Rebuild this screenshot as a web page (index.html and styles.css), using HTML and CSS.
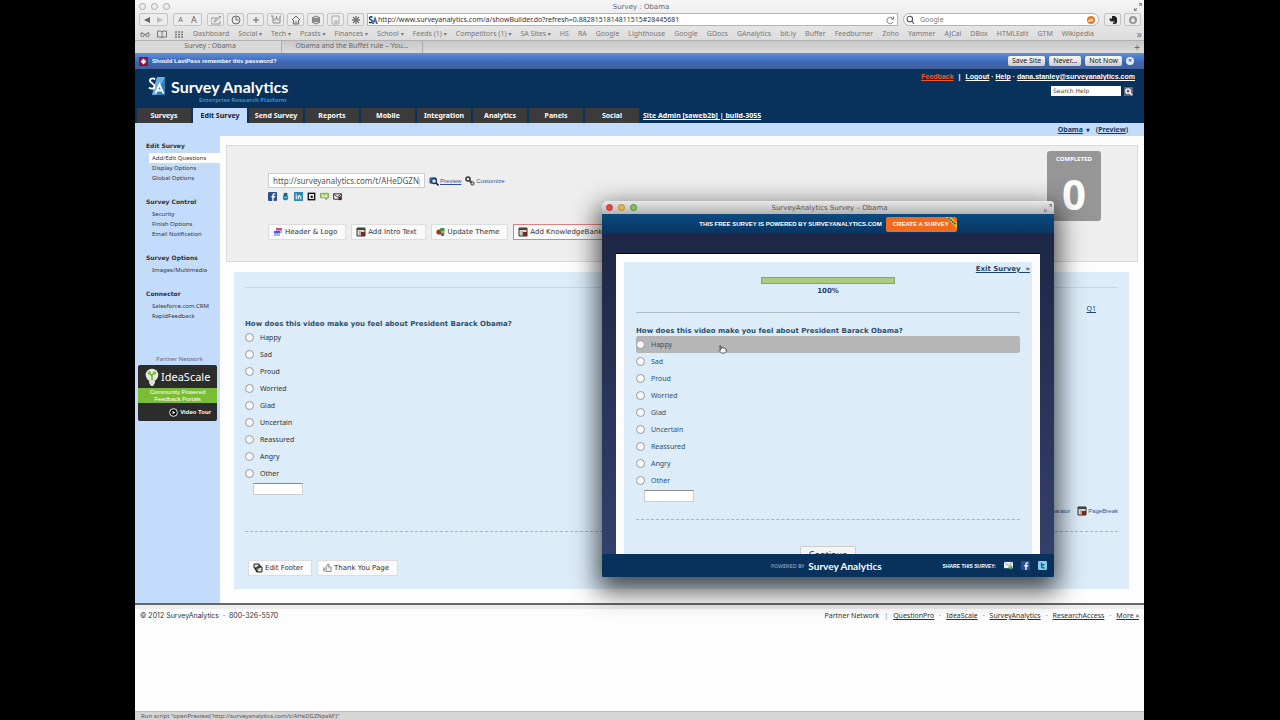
FILE: index.html
```html
<!DOCTYPE html>
<html lang="en">
<head>
<meta charset="utf-8">
<title>Survey : Obama</title>
<link rel="stylesheet" href="styles.css">
</head>
<body>
<svg class="defs" aria-hidden="true">
  <symbol id="i-page" viewBox="0 0 10 10"><path d="M1 1h8v8H1z" fill="#ddd8cc" stroke="#333"/><path d="M1 1h8v2H1z" fill="#444"/><path d="M5 5l4 0v4H5z" fill="#7a241c"/><path d="M3 5h2M3 7h2" stroke="#888"/></symbol>
  <symbol id="i-windows" viewBox="0 0 10 10"><path d="M3 1h6v5H3z" fill="#c9a0dd"/><path d="M3 1h6v2H3z" fill="#d44a7c"/><path d="M1 4h6v5H1z" fill="#9bb5f2"/><path d="M1 4h6v2H1z" fill="#4a5ad0"/></symbol>
  <symbol id="i-theme" viewBox="0 0 10 10"><circle cx="3" cy="5" r="2.6" fill="#a8301c"/><rect x="4" y="1" width="4.500" height="4.500" rx="1" fill="#2c9a3e"/><rect x="5.500" y="4" width="3" height="3" fill="#e0b030"/><circle cx="6.500" cy="7.500" r="1.800" fill="#2f6ec4"/></symbol>
  <symbol id="i-glass" viewBox="0 0 10 10"><path d="M1 2h6v5H1z" fill="#8fb4d8" stroke="#234"/><circle cx="5" cy="5" r="2.500" fill="#cfe4f5" stroke="#123c66" stroke-width="1.300"/><path d="M7 7l2.500 2.500" stroke="#222" stroke-width="1.600"/></symbol>
  <symbol id="i-tools" viewBox="0 0 10 10"><circle cx="3" cy="3" r="2" fill="none" stroke="#333" stroke-width="1.500"/><path d="M4 4l3 3" stroke="#444" stroke-width="2"/><circle cx="7.500" cy="7.500" r="1.600" fill="#ccc" stroke="#333"/></symbol>
  <symbol id="i-fb" viewBox="0 0 10 10"><rect width="10" height="10" rx="1" fill="#2f4f8f"/><path d="M8 2H7C6 2 5.500 2.700 5.500 3.500V10M3.800 5.300H8" fill="none" stroke="#fff" stroke-width="1.500"/></symbol>
  <symbol id="i-bird" viewBox="0 0 10 10"><ellipse cx="5" cy="6" rx="3" ry="3.300" fill="#2a7fae"/><path d="M3 1h4v3H3z" fill="#1c5d86"/><path d="M3 6h4" stroke="#7fc4e6"/></symbol>
  <symbol id="i-in" viewBox="0 0 10 10"><rect width="10" height="10" fill="#2f88b4"/><path d="M2.500 4v4M2.500 2v1M4.800 8V4M4.800 5.500C5 4 7.500 3.800 7.500 5.500V8" fill="none" stroke="#fff" stroke-width="1.200"/></symbol>
  <symbol id="i-qr" viewBox="0 0 10 10"><rect x="1.500" y="1.500" width="7" height="7" fill="#fff" stroke="#111" stroke-width="1.600"/><rect x="4" y="4" width="2.500" height="2.500" fill="#111"/></symbol>
  <symbol id="i-chat" viewBox="0 0 10 10"><path d="M.5 1.500h9v5H8L7 9 5.500 6.500h-5z" fill="#a6d468" stroke="#6a9c35" stroke-width=".8"/><path d="M3 3v2h4V3" fill="none" stroke="#fff"/></symbol>
  <symbol id="i-mail" viewBox="0 0 10 10"><path d="M.7 2h8.600v6H.7z" fill="#eee" stroke="#222"/><path d="M1 2.500l4 3 4-3" fill="none" stroke="#333"/><path d="M6 5h3.500v4H6z" fill="#5a2a26"/></symbol>
  <symbol id="i-share" viewBox="0 0 10 10"><path d="M0 1h10v7H0z" fill="#e8f2f4"/><path d="M0 1l5 4 5-4" fill="none" stroke="#89a"/><path d="M5 6h2V4l3 3-3 3V8H5z" fill="#5fb04a"/></symbol>
  <symbol id="i-tw" viewBox="0 0 10 10"><rect width="10" height="10" rx="1.500" fill="#7fd0ea"/><path d="M4 2v4c0 1.500 1 1.800 3.500 1.600M4 4.200h3" fill="none" stroke="#1d5f80" stroke-width="1.500"/></symbol>
  <symbol id="i-expand" viewBox="0 0 10 10"><path d="M5.500 1H9v3.500zM1 5.500V9h3.500z" fill="#888"/><path d="M8.500 1.500l-2.500 2.500M1.500 8.500L4 6" stroke="#888"/></symbol>
  <symbol id="i-footer" viewBox="0 0 10 10"><path d="M1 1h5v4H1zM4 4h5v5H4z" fill="#d8e0da" stroke="#222"/><path d="M2 5l2 4M6 2l2 2" stroke="#222" stroke-width="1.500"/></symbol>
  <symbol id="i-thumb" viewBox="0 0 10 10"><path d="M4 4l2-3 1 .5L6.500 4H9v4.500H4z" fill="#eee" stroke="#777" stroke-width=".8"/><path d="M1 4.500h2v4H1z" fill="#aaa"/></symbol>
</svg>

<div class="browser">
  <header class="chrome">
    <div class="titlebar">
      <span class="lights"><i></i><i></i><i></i></span>
      <span class="win-title">Survey : Obama</span>
      <svg class="ic"><use href="#i-expand"/></svg>
    </div>
    <div class="toolbar">
      <div class="tool wide"><button aria-label="Back"><svg class="ic" viewBox="0 0 10 10"><path d="M8 2v6L2 5z" fill="#666"/></svg></button><button aria-label="Forward"><svg class="ic" viewBox="0 0 10 10"><path d="M2 2v6l6-3z" fill="#bbb"/></svg></button></div>
      <div class="tool wide"><button class="small-a">A</button><button class="big-a">A</button></div>
      <button class="tool" aria-label="Edit"><svg class="ic" viewBox="0 0 10 10" fill="none" stroke="#888" stroke-width=".8"><path d="M6 3H0v6h9V6M3 7l1-2 5-4 1 1-5 4z"/></svg></button>
      <button class="tool" aria-label="History"><svg class="ic" viewBox="0 0 10 10" fill="none" stroke="#666"><circle cx="5" cy="5" r="4"/><path d="M5 2v3h2.500"/></svg></button>
      <button class="tool" aria-label="Add"><svg class="ic" viewBox="0 0 10 10" stroke="#666"><path d="M5 2v6M2 5h6"/></svg></button>
      <button class="tool" aria-label="Cart"><svg class="ic" viewBox="0 0 10 10" fill="none" stroke="#888"><path d="M0 1h2v7h7V1h1M4 3v3M7 3v3M5.500 1v3"/></svg></button>
      <button class="tool" aria-label="Home"><svg class="ic" viewBox="0 0 10 10" fill="none" stroke="#666"><path d="M1 5l4-4 4 4M2.500 5v4h5V5M5 9V6"/></svg></button>
      <button class="tool" aria-label="Stack"><svg class="ic" viewBox="0 0 10 10" fill="#eee" stroke="#666" stroke-width=".9"><path d="M5 5l4 2-4 2-4-2zM5 3l4 2-4 2-4-2zM5 1l4 2-4 2-4-2z"/></svg></button>
      <button class="tool" aria-label="Note"><svg class="ic" viewBox="0 0 10 10" fill="none" stroke="#aaa"><path d="M1 1h7v8H1zM5 5v4M3 7h4"/></svg></button>
      <button class="tool" aria-label="Password"><svg class="ic" viewBox="0 0 10 10" stroke="#777" stroke-width="1.300"><path d="M5 1v8M1 5h8M2 2l6 6M8 2L2 8"/></svg></button>
      <label class="field url"><svg class="ic" viewBox="0 0 10 10"><path d="M4.500 2.500C3 1 1 2 1.500 3.500S4.500 5 4.300 6.500 2 8 1 7" fill="none" stroke="#123c66" stroke-width="1.400"/><path d="M4 9l3-8 3 8H8L7 6 6 9z" fill="#3d6fa5"/></svg><input aria-label="Address" value="http://www.surveyanalytics.com/a/showBuilder.do?refresh=0.8828151814811515#28445681"><svg class="ic" viewBox="0 0 10 10" fill="none" stroke="#777"><path d="M8 4a3.200 3.200 0 1 0 0 3M8.500 1.500V4H6"/></svg></label>
      <label class="field search"><svg class="ic" viewBox="0 0 10 10" fill="none" stroke="#555" stroke-width="1.100"><circle cx="3.800" cy="4" r="2.800"/><path d="M6 6l2 3"/></svg><input aria-label="Search" placeholder="Google"><svg class="ic" viewBox="0 0 10 10"><circle cx="5" cy="5" r="4" fill="#ea7a22"/><path d="M3 7V5h4M5.500 3.500L7 5 5.500 6.500" fill="none" stroke="#fff"/></svg></label>
      <button class="tool" aria-label="Clip"><svg class="ic" viewBox="0 0 10 10" fill="#222"><path d="M4 1h3l2 2v5L7 9H5V7.500h1.500V6.500H3L1.500 5V3.500H4z"/></svg></button>
      <button class="tool last" aria-label="Downloads"><svg class="ic" viewBox="0 0 10 10"><circle cx="5" cy="5" r="4" fill="#999"/><path d="M5 3v4M3.500 5L5 6.500 6.500 5" fill="none" stroke="#fff" stroke-width="1.300"/></svg></button>
    </div>
    <nav class="bookmarks">
      <span class="bm-icons">
        <svg viewBox="0 0 10 8" fill="none" stroke="#777"><circle cx="2.500" cy="5" r="1.700"/><circle cx="7.500" cy="5" r="1.700"/><path d="M1 4l1-2M9 4L8 2M4 4.500h2"/></svg>
        <svg viewBox="0 0 10 8" fill="none" stroke="#777"><path d="M.5 1H4l1 1 1-1h3.500v6H6L5 8 4 7H.5zM5 2v5"/></svg>
        <svg viewBox="0 0 10 8" stroke="#777" stroke-width="1.500" stroke-dasharray="2 1"><path d="M1 2h8M1 4.500h8M1 7h8"/></svg>
      </span>
      <a href="#">Dashboard</a><a href="#">Social <b>▾</b></a><a href="#">Tech <b>▾</b></a><a href="#">Pcasts <b>▾</b></a><a href="#">Finances <b>▾</b></a><a href="#">School <b>▾</b></a><a href="#">Feeds (1) <b>▾</b></a><a href="#">Competitors (1) <b>▾</b></a><a href="#">SA Sites <b>▾</b></a><a href="#">HS</a><a href="#">RA</a><a href="#">Google</a><a href="#">Lighthouse</a><a href="#">Google</a><a href="#">GDocs</a><a href="#">GAnalytics</a><a href="#">bit.ly</a><a href="#">Buffer</a><a href="#">Feedburner</a><a href="#">Zoho</a><a href="#">Yammer</a><a href="#">AJCal</a><a href="#">DBox</a><a href="#">HTMLEdit</a><a href="#">GTM</a><a href="#">Wikipedia</a>
      <span class="more">»</span>
    </nav>
    <div class="page-tabs"><span class="page-tab on">Survey : Obama</span><span class="page-tab">Obama and the Buffet rule – You...</span><button class="new-tab" aria-label="New tab">+</button></div>
  </header>

  <div class="lastpass">
    <svg class="lp-ic" viewBox="0 0 10 10"><rect width="10" height="10" fill="#8c1236"/><path d="M5 2v6M2 5h6M3 3l4 4M7 3L3 7" stroke="#fff" stroke-width="1.200"/></svg>
    <span class="lp-text">Should LastPass remember this password?</span>
    <button>Save Site</button><button>Never...</button><button>Not Now</button>
    <button class="lp-close" aria-label="Close">×</button>
  </div>

  <div class="site-head">
    <div class="brand-row">
      <svg class="logo" viewBox="0 0 18 20"><path d="M9 1h8v18H4z" fill="#2f7fbd"/><path d="M9 1h8L8 19H4z" fill="#69b0e0"/><path d="M7 3.500C5 1.500 1.500 2.500 2 5s5 2.500 4.500 5.500-4 2.500-5.500 1" fill="none" stroke="#fff" stroke-width="1.800"/><path d="M7.500 17.500l4-9 4 9M9 14.500h5" fill="none" stroke="#fff" stroke-width="1.800"/></svg>
      <div class="brand"><div class="brand-name">Survey Analytics</div><div class="tagline">Enterprise Research Platform</div></div>
      <div class="account">
        <div class="links"><a class="feedback" href="#">Feedback</a><span>|</span><a href="#">Logout</a> · <a href="#">Help</a> · <a href="#">dana.stanley@surveyanalytics.com</a></div>
        <div class="help"><input aria-label="Search Help" value="Search Help"><button aria-label="Search"><svg viewBox="0 0 10 10" fill="none" stroke="#fff" stroke-width="1.500"><circle cx="4.500" cy="4.500" r="2.500"/><path d="M6.500 6.500L9 9"/></svg></button></div>
      </div>
    </div>
    <nav class="tabs"><a href="#">Surveys</a><a class="on" href="#">Edit Survey</a><a href="#">Send Survey</a><a href="#">Reports</a><a href="#">Mobile</a><a href="#">Integration</a><a href="#">Analytics</a><a href="#">Panels</a><a href="#">Social</a><a class="admin" href="#">Site Admin [saweb2b] | build-3055</a></nav>
  </div>
  <div class="subbar"><a href="#">Obama</a><span class="tri">▼</span><span class="preview">(<a href="#">Preview</a>)</span></div>

  <div class="content">
    <aside class="side">
      <h2>Edit Survey</h2><a class="on" href="#">Add/Edit Questions</a><a href="#">Display Options</a><a href="#">Global Options</a>
      <h2>Survey Control</h2><a href="#">Security</a><a href="#">Finish Options</a><a href="#">Email Notification</a>
      <h2>Survey Options</h2><a href="#">Images/Multimedia</a>
      <h2>Connector</h2><a href="#">Salesforce.com CRM</a><a href="#">RapidFeedback</a>
      <div class="partner">Partner Network</div>
      <div class="idea">
        <div class="idea-top"><svg viewBox="0 0 14 18"><circle cx="7" cy="7" r="6.300" fill="#e6ecd9"/><path d="M4 11h6v4l-2 3H6l-2-3z" fill="#ddd"/><path d="M7 12V6M7 8L4 5M7 7l3-3" stroke="#6fae35" stroke-width="1.500"/><circle cx="4.500" cy="5" r="1.700" fill="#82bd45"/><circle cx="9.500" cy="5" r="1.700" fill="#82bd45"/></svg>IdeaScale</div>
        <div class="idea-mid">Community Powered<br>Feedback Portals</div>
        <div class="idea-bot"><svg viewBox="0 0 10 10"><circle cx="5" cy="5" r="4.300" fill="#111" stroke="#fff"/><path d="M4 3v4l3-2z" fill="#fff"/></svg>Video Tour</div>
      </div>
    </aside>
    <main class="main">
      <section class="panel">
        <div class="panel-left">
          <div class="link-row"><input class="share-url" aria-label="Survey link" value="http://surveyanalytics.com/t/AHeDGZNpsM"><a href="#"><svg class="ic"><use href="#i-glass"/></svg><u>Preview</u></a><a href="#"><svg class="ic"><use href="#i-tools"/></svg>Customize</a></div>
          <div class="social"><svg><use href="#i-fb"/></svg><svg><use href="#i-bird"/></svg><svg><use href="#i-in"/></svg><svg><use href="#i-qr"/></svg><svg><use href="#i-chat"/></svg><svg><use href="#i-mail"/></svg></div>
          <div class="actions"><button class="act"><svg class="ic"><use href="#i-windows"/></svg>Header &amp; Logo</button><button class="act"><svg class="ic"><use href="#i-page"/></svg>Add Intro Text</button><button class="act"><svg class="ic"><use href="#i-theme"/></svg>Update Theme</button><button class="act red"><svg class="ic"><use href="#i-page"/></svg>Add KnowledgeBank</button></div>
        </div>
        <div class="completed"><span>COMPLETED</span><strong>0</strong></div>
      </section>
      <section class="builder">
        <hr>
        <div class="qnum"><a href="#">Q1</a></div>
        <fieldset class="question">
          <legend>How does this video make you feel about President Barack Obama?</legend>
          <label><input type="radio" name="a">Happy</label><label><input type="radio" name="a">Sad</label><label><input type="radio" name="a">Proud</label><label><input type="radio" name="a">Worried</label><label><input type="radio" name="a">Glad</label><label><input type="radio" name="a">Uncertain</label><label><input type="radio" name="a">Reassured</label><label><input type="radio" name="a">Angry</label><label><input type="radio" name="a">Other</label>
          <input class="other" aria-label="Other answer">
        </fieldset>
        <div class="breaks"><a href="#">Separator</a><a href="#"><svg class="ic"><use href="#i-page"/></svg>PageBreak</a></div>
        <hr class="dots">
        <div class="actions"><button class="act"><svg class="ic"><use href="#i-footer"/></svg>Edit Footer</button><button class="act"><svg class="ic"><use href="#i-thumb"/></svg>Thank You Page</button></div>
      </section>
    </main>
  </div>
  <footer class="foot">
    <span class="copy">© 2012 SurveyAnalytics &nbsp;·&nbsp; 800-326-5570</span>
    <span>Partner Network</span><i>|</i><a href="#">QuestionPro</a><i>·</i><a href="#">IdeaScale</a><i>·</i><a href="#">SurveyAnalytics</a><i>·</i><a href="#">ResearchAccess</a><i>·</i><a href="#">More »</a>
  </footer>
  <div class="status">Run script "openPreview('http://surveyanalytics.com/t/AHeDGZNpsM')"</div>

  <div class="popup" role="dialog" aria-label="SurveyAnalytics Survey - Obama">
    <div class="pop-title titlebar"><span class="lights color"><i></i><i></i><i></i></span><span class="win-title">SurveyAnalytics Survey – Obama</span><svg class="ic"><use href="#i-expand"/></svg></div>
    <div class="pop-banner"><span>THIS FREE SURVEY IS POWERED BY SURVEYANALYTICS.COM</span><button class="create">CREATE A SURVEY<svg viewBox="0 0 16 14"><path d="M3 0h6l7 7v6z" fill="#d9c63c"/><path d="M6 1l9 8" stroke="#38522a" stroke-width="2" stroke-dasharray="2 1"/></svg></button></div>
    <div class="pop-body">
      <div class="sheet"><div class="sheet-in">
        <a class="exit" href="#">Exit Survey &nbsp;»</a>
        <div class="progress"></div>
        <div class="pct">100%</div>
        <hr class="gray">
        <fieldset class="question">
          <legend>How does this video make you feel about President Barack Obama?</legend>
          <label class="hover"><input type="radio" name="b">Happy</label><label><input type="radio" name="b">Sad</label><label><input type="radio" name="b">Proud</label><label><input type="radio" name="b">Worried</label><label><input type="radio" name="b">Glad</label><label><input type="radio" name="b">Uncertain</label><label><input type="radio" name="b">Reassured</label><label><input type="radio" name="b">Angry</label><label><input type="radio" name="b">Other</label>
          <input class="other" aria-label="Other answer">
        </fieldset>
        <hr class="dots">
        <button class="continue">Continue</button>
      </div></div>
    </div>
    <div class="pop-foot"><span class="powered">POWERED BY</span><span class="pop-brand">Survey Analytics</span><span class="share">SHARE THIS SURVEY:</span><svg><use href="#i-share"/></svg><svg><use href="#i-fb"/></svg><svg><use href="#i-tw"/></svg></div>
    <svg class="cursor" viewBox="0 0 10 10"><path d="M2 1l1 0 1 3V3h1l1 .5 1-.2 2 1v3L7.500 9H4L1 6l1-1 1 1z" fill="#fff" stroke="#222" stroke-width=".8"/></svg>
  </div>
</div>
</body>
</html>
```
FILE: styles.css
```css
* { box-sizing: border-box; }
body { margin: 0; padding: 0 136px 0 135px; background: #000; font: 7px/10px "Noto Sans", "Open Sans", sans-serif; color: #333; }
button, input { font: inherit; color: inherit; margin: 0; padding: 0; }
button { border: 0; background: none; }
a { color: inherit; }
hr { margin: 0; border: 0; border-top: 1px solid #ccd6de; }
.defs { display: none; }
.ic { width: 10px; height: 10px; flex: none; }
.browser { position: relative; display: flex; flex-direction: column; height: 100vh; background: #fdfdfd; overflow: hidden; }

/* browser chrome */
.chrome { background: linear-gradient(#f6f6f6, #dcdcdc 40px, #cfcfcf); color: #666; }
.titlebar { display: grid; grid-template-columns: 1fr auto 1fr; align-items: center; height: 13px; padding: 0 1px 0 4px; }
.titlebar .ic { justify-self: end; }
.win-title { font-family: "DejaVu Sans", sans-serif; }
.lights { display: flex; gap: 5px; }
.lights i { width: 7px; height: 7px; border: 1px solid #aaa; border-radius: 50%; background: #eee; }
.toolbar { display: flex; gap: 3px; height: 14px; padding: 0 3px 0 4px; }
.tool { display: flex; align-items: center; justify-content: center; width: 17px; height: 13px; border: 1px solid #c4c4c4; border-radius: 2px; background: #ececec; }
.wide { width: 29px; justify-content: space-around; margin-right: 2px; }
.wide button { display: flex; }
.small-a { font-size: 7px; }
.big-a { font-size: 9px; }
.field { display: flex; align-items: center; height: 13px; border: 1px solid #b4b4b4; background: #fff; padding: 0 2px 0 0; }
.field input { flex: 1; min-width: 0; border: 0; outline: 0; background: none; color: #333; }
.url { flex: 1; }
.search { width: 196px; border-radius: 7px; margin: 0 2px; padding: 0 2px; gap: 4px; }
.bookmarks { display: flex; align-items: center; gap: 9px; height: 13px; padding: 0 2px 0 5px; color: #777; white-space: nowrap; overflow: hidden; }
.bookmarks a { text-decoration: none; }
.bookmarks b { font: 6px/6px "DejaVu Sans", sans-serif; }
.bm-icons { display: flex; gap: 7px; }
.bm-icons svg { width: 10px; height: 8px; }
.more { margin-left: auto; font-size: 11px; }
.page-tabs { display: flex; align-items: center; height: 13px; border-top: 1px solid #b0b0b0; background: linear-gradient(#c8c8c8, #dadada); }
.page-tab { width: 141px; height: 12px; text-align: center; border-right: 1px solid #aaa; }
.page-tab.on { width: 147px; padding-left: 4px; background: #d9d9d9; }
.new-tab { margin: 0 4px 0 auto; font-size: 10px; }

/* password bar */
.lastpass { display: flex; align-items: center; gap: 4px; height: 16px; padding: 0 10px 0 4px; background: linear-gradient(#5d8fdd, #3b66b4 60%, #44609a); }
.lp-ic { width: 9px; height: 9px; }
.lp-text { flex: 1; color: #fff; font: bold 6px/10px "Liberation Sans", Arial, sans-serif; }
.lastpass button { height: 10px; padding: 0 4px; border-radius: 2px; background: linear-gradient(#fafafa, #ccc); color: #222; }
.lastpass .lp-close { width: 8px; height: 8px; padding: 0; border-radius: 50%; background: #e4ebf6; line-height: 8px; }

/* site header */
.site-head { background: #08315b; color: #fff; }
.brand-row { display: flex; height: 39px; padding: 0 9px 0 13px; }
.logo { width: 18px; height: 20px; margin-top: 7px; }
.brand { flex: 1; margin: 9px 0 0 5px; }
.brand-name { font: bold 16px/18px Lato, sans-serif; }
.tagline { padding-left: 28px; font-size: 6px; line-height: 8px; color: #3c8cc0; font-weight: bold; }
.account { display: flex; flex-direction: column; align-items: flex-end; gap: 4px; padding-top: 3px; font: bold 7px/10px "Liberation Sans", Arial, sans-serif; }
.links span { margin: 0 5px; }
.feedback { color: #f0582a; }
.help { display: flex; align-items: center; gap: 3px; padding-right: 2px; }
.help input { width: 70px; height: 10px; padding: 0 2px; border: 0; background: #fff; color: #444; font: 6px/10px "DejaVu Sans", sans-serif; }
.help button { display: flex; width: 9px; height: 9px; background: #667; }
.help svg { width: 9px; height: 9px; }
.tabs { display: flex; gap: 2px; padding-left: 2px; font: bold 7px/15px "Noto Sans", sans-serif; }
.tabs a { width: 54px; height: 15px; text-align: center; background: #3b3b3b; text-decoration: none; white-space: nowrap; }
.tabs a.on { background: #c4dcfc; color: #123; }
.tabs a.admin { width: auto; background: none; padding-left: 2px; text-decoration: underline; }
.subbar { display: flex; justify-content: flex-end; gap: 3px; height: 13px; padding: 2px 16px 0 0; background: #c4dcfc; color: #123c66; font-weight: bold; }
.tri { font: 5px/10px "DejaVu Sans", sans-serif; }
.preview { padding-left: 3px; }

/* sidebar */
.content { display: flex; height: 467px; flex: none; }
.side { width: 85px; padding: 3px 0 0 11px; background: #c4dcfc; white-space: nowrap; }
.side h2 { margin: 12px 0 0; font: bold 6px/14px "DejaVu Sans", sans-serif; }
.side h2:first-child { margin-top: 0; }
.side a { display: block; margin-left: 3px; padding-left: 3px; line-height: 10px; font-size: 6px; text-decoration: none; }
.side a.on { background: #fff; }
.partner { margin: 34px 0 0 10px; font-size: 6px; line-height: 8px; color: #667; }
.idea { width: 79px; margin: 2px 0 0 -8px; background: #2c2c2c; color: #fff; border-radius: 2px; }
.idea-top { display: flex; align-items: center; gap: 2px; height: 23px; padding-left: 7px; font-size: 11px; }
.idea-top svg { width: 14px; height: 18px; }
.idea-mid { height: 15px; padding-top: 1px; background: #7cbd36; text-align: center; font: 6px/7px "Liberation Sans", Arial, sans-serif; }
.idea-bot { display: flex; align-items: center; justify-content: flex-end; gap: 2px; height: 18px; padding-right: 6px; font: bold 6px/10px "Liberation Sans", Arial, sans-serif; }
.idea-bot svg { width: 9px; height: 9px; }

/* survey builder */
.main { flex: 1; padding: 9px 6px 0; }
.panel { display: flex; justify-content: space-between; height: 117px; padding: 5px 36px 0 41px; background: #eee; border: 1px solid #dadada; }
.link-row { display: flex; align-items: center; gap: 4px; padding-top: 22px; }
.link-row a { display: flex; align-items: center; gap: 1px; font: 6px/10px "Liberation Sans", Arial, sans-serif; color: #34509a; text-decoration: none; }
.share-url { width: 157px; height: 15px; padding: 0 4px; border: 1px solid #ccc; background: #fff; font-size: 8px; color: #555; }
.social { display: flex; gap: 4px; margin-top: 4px; }
.social svg { width: 9px; height: 9px; }
.actions { display: flex; gap: 5px; }
.panel .actions { margin-top: 23px; }
.act { display: flex; align-items: center; gap: 2px; height: 16px; padding: 0 8px 0 4px; border: 1px solid #ddd; background: #fafafa; font-family: "DejaVu Sans", sans-serif; white-space: nowrap; }
.act.red { border-color: #e08080; }
.completed { display: flex; flex-direction: column; align-items: center; width: 54px; height: 70px; border-radius: 3px; background: #969696; color: #fff; font-size: 6px; line-height: 16px; font-weight: bold; }
.completed strong { font: bold 42px/54px "Noto Sans", sans-serif; }
.builder { margin: 10px 9px 0 8px; height: 317px; padding: 15px 11px 0; background: #dcecf9; }
.qnum { padding: 16px 22px 0 0; text-align: right; line-height: 10px; color: #246; }
.question { margin: 5px 0 0; padding: 0; border: 0; min-width: 0; color: #2c5370; }
.question legend { padding: 0; font: bold 7px/10px "DejaVu Sans", sans-serif; white-space: nowrap; color: #2c5070; }
.question label { display: flex; align-items: center; gap: 6px; height: 17px; }
.question input[type="radio"] { appearance: none; width: 9px; height: 9px; border: 1px solid #999; border-radius: 50%; background: #f8f8f8; }
.builder .question { color: #333; }
.other { display: block; width: 50px; height: 12px; margin: 1px 0 0 8px; border: 1px solid #ccc; border-top-color: #888; background: #fff; }
.breaks { display: flex; justify-content: flex-end; gap: 7px; margin-top: 11px; color: #34509a; font: 6px/10px "Liberation Sans", Arial, sans-serif; }
.breaks a { display: flex; text-decoration: none; gap: 1px; }
.dots { border-top: 1px dashed #a4b6c4; }
.builder .dots { margin-top: 15px; }
.builder .actions { margin: 28px 0 0 3px; }

/* page footer */
.foot { display: flex; gap: 5px; padding: 6px 5px 0; border-top: 2px solid #666; background: linear-gradient(#eee, #eee 4px, #fdfdfd 4px); flex: 1; white-space: nowrap; }
.foot i { font-style: normal; color: #888; }
.copy { flex: 1; font-family: Inter, sans-serif; }
.status { height: 9px; padding-left: 6px; background: #d5d5d5; border-top: 1px solid #bbb; font-size: 6px; line-height: 8px; color: #555; }

/* preview window */
.popup { position: absolute; left: 467px; top: 201px; width: 452px; height: 376px; display: flex; flex-direction: column; background: #08315b; border-radius: 3px 3px 1px 1px; box-shadow: 0 10px 26px 4px rgba(0, 0, 0, .7); }
.pop-title { background: linear-gradient(#e8e8e8, #b4b4b4); border-radius: 3px 3px 0 0; color: #555; }
.color i:nth-child(1) { background: #e0483e; border-color: #a44; }
.color i:nth-child(2) { background: #f0b04a; border-color: #a83; }
.color i:nth-child(3) { background: #84bf5a; border-color: #583; }
.pop-banner { display: flex; align-items: center; justify-content: center; gap: 4px; height: 20px; background: linear-gradient(#0a4a80, #093560); color: #fff; font: bold 6px/10px "Liberation Sans", Arial, sans-serif; }
.create { position: relative; height: 15px; padding: 0 8px 0 7px; border-radius: 2px; background: #f36a1c; }
.create svg { position: absolute; right: 0; top: 0; width: 14px; height: 12px; }
.pop-body { flex: 1; min-height: 0; overflow: hidden; padding: 19px 14px 0; background: linear-gradient(#1d2745, #33406b); }
.sheet { padding: 8px 8px 0; background: #fdfdfd; border-top: 1px solid #000; }
.sheet-in { display: flex; flex-direction: column; padding: 2px 12px 0; height: 320px; background: #dcecf9; color: #1f4567; }
.exit { align-self: flex-end; margin-right: -10px; font: bold 7px/10px "DejaVu Sans", sans-serif; }
.progress { align-self: center; width: 134px; height: 7px; margin-top: 3px; border: 1px solid #86a860; background: #a8cc7a; }
.pct { text-align: center; margin-top: 2px; font: bold 7px/10px "DejaVu Sans", sans-serif; }
.gray { margin-top: 16px; border-color: #b4bcc2; }
.sheet .question { margin-top: 13px; }
.hover { background: #b6b6b6; border-radius: 2px; }
.sheet .dots { margin: 17px 0 0; }
.continue { align-self: center; width: 56px; height: 18px; margin-top: 26px; border: 1px solid #ccc; border-radius: 2px; background: #f4f4f4; font-size: 9px; color: #333; }
.pop-foot { display: flex; align-items: center; gap: 8px; height: 23px; padding: 0 7px 0 169px; color: #fff; white-space: nowrap; }
.powered { font: 5px/10px "DejaVu Sans", sans-serif; color: #a9bccd; margin-right: -4px; }
.pop-brand { flex: 1; font: bold 10px/14px Lato, sans-serif; }
.share { font: bold 5px/10px "Liberation Sans", Arial, sans-serif; }
.pop-foot svg { width: 9px; height: 9px; }
.cursor { position: absolute; left: 116px; top: 143px; width: 9px; height: 11px; }
```
